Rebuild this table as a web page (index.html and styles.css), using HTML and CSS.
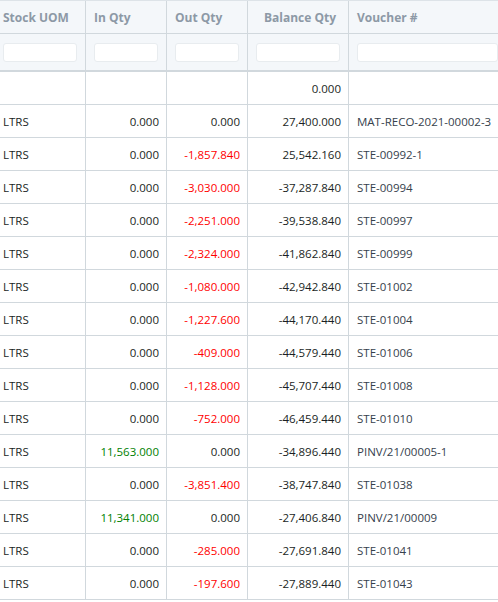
FILE: index.html
```html
<!DOCTYPE html>
<html>
<head>
<meta charset="utf-8">
<link rel="stylesheet" href="styles.css">
</head>
<body>
<div class="grid">
  <div class="row head">
    <div class="cell">Stock UOM</div>
    <div class="cell">In Qty</div>
    <div class="cell">Out Qty</div>
    <div class="cell num pr">Balance Qty</div>
    <div class="cell">Voucher #</div>
  </div>
  <div class="row filter">
    <div class="cell"><input class="fi" type="text"></div>
    <div class="cell"><input class="fi" type="text"></div>
    <div class="cell"><input class="fi" type="text"></div>
    <div class="cell"><input class="fi" type="text"></div>
    <div class="cell"><input class="fi" type="text"></div>
  </div>
  <div class="body" id="body">
    <div class="row data">
      <div class="cell"></div><div class="cell"></div><div class="cell"></div>
      <div class="cell num">0.000</div><div class="cell"></div>
    </div>
    <div class="row data"><div class="cell">LTRS</div><div class="cell num">0.000</div><div class="cell num">0.000</div><div class="cell num">27,400.000</div><div class="cell v">MAT-RECO-2021-00002-3</div></div>
    <div class="row data"><div class="cell">LTRS</div><div class="cell num">0.000</div><div class="cell num red">-1,857.840</div><div class="cell num">25,542.160</div><div class="cell v">STE-00992-1</div></div>
    <div class="row data"><div class="cell">LTRS</div><div class="cell num">0.000</div><div class="cell num red">-3,030.000</div><div class="cell num">-37,287.840</div><div class="cell v">STE-00994</div></div>
    <div class="row data"><div class="cell">LTRS</div><div class="cell num">0.000</div><div class="cell num red">-2,251.000</div><div class="cell num">-39,538.840</div><div class="cell v">STE-00997</div></div>
    <div class="row data"><div class="cell">LTRS</div><div class="cell num">0.000</div><div class="cell num red">-2,324.000</div><div class="cell num">-41,862.840</div><div class="cell v">STE-00999</div></div>
    <div class="row data"><div class="cell">LTRS</div><div class="cell num">0.000</div><div class="cell num red">-1,080.000</div><div class="cell num">-42,942.840</div><div class="cell v">STE-01002</div></div>
    <div class="row data"><div class="cell">LTRS</div><div class="cell num">0.000</div><div class="cell num red">-1,227.600</div><div class="cell num">-44,170.440</div><div class="cell v">STE-01004</div></div>
    <div class="row data"><div class="cell">LTRS</div><div class="cell num">0.000</div><div class="cell num red">-409.000</div><div class="cell num">-44,579.440</div><div class="cell v">STE-01006</div></div>
    <div class="row data"><div class="cell">LTRS</div><div class="cell num">0.000</div><div class="cell num red">-1,128.000</div><div class="cell num">-45,707.440</div><div class="cell v">STE-01008</div></div>
    <div class="row data"><div class="cell">LTRS</div><div class="cell num">0.000</div><div class="cell num red">-752.000</div><div class="cell num">-46,459.440</div><div class="cell v">STE-01010</div></div>
    <div class="row data"><div class="cell">LTRS</div><div class="cell num green">11,563.000</div><div class="cell num">0.000</div><div class="cell num">-34,896.440</div><div class="cell v">PINV/21/00005-1</div></div>
    <div class="row data"><div class="cell">LTRS</div><div class="cell num">0.000</div><div class="cell num red">-3,851.400</div><div class="cell num">-38,747.840</div><div class="cell v">STE-01038</div></div>
    <div class="row data"><div class="cell">LTRS</div><div class="cell num green">11,341.000</div><div class="cell num">0.000</div><div class="cell num">-27,406.840</div><div class="cell v">PINV/21/00009</div></div>
    <div class="row data"><div class="cell">LTRS</div><div class="cell num">0.000</div><div class="cell num red">-285.000</div><div class="cell num">-27,691.840</div><div class="cell v">STE-01041</div></div>
    <div class="row data"><div class="cell">LTRS</div><div class="cell num">0.000</div><div class="cell num red">-197.600</div><div class="cell num">-27,889.440</div><div class="cell v">STE-01043</div></div>
  </div>
</div>
</body>
</html>
```
FILE: styles.css
```css
html, body {
  margin: 0;
  padding: 0;
  background: #ffffff;
  overflow: hidden;
}
body {
  width: 498px;
  height: 602px;
  font-family: "Open Sans", "Noto Sans", sans-serif;
  font-size: 11.5px;
  color: #1a1f24;
}
.grid {
  margin-left: -5px;
  width: 512px;
}
.row {
  display: grid;
  grid-template-columns: 91px 81px 81px 101px 158px;
}
.cell {
  border-right: 1px solid #d1d8dd;
  padding: 0 7px 0 8px;
  display: flex;
  align-items: center;
  white-space: nowrap;
  overflow: hidden;
}
.cell.num {
  justify-content: flex-end;
}
.head {
  height: 34px;
  border-top: 1px solid #dde3e8;
  border-bottom: 1px solid #d1d8dd;
  background: #f4f7fa;
  box-sizing: border-box;
  font-size: 12px;
}
.head .cell {
  font-weight: 700;
  color: #8d99a6;
}
.head .cell.pr {
  padding-right: 12px;
}
.filter {
  height: 36px;
  background: #f4f7fa;
  border-bottom: 2px solid #d1d8dd;
  box-sizing: content-box;
}
.filter .cell {
  padding: 0 8px;
}
.fi {
  width: 100%;
  height: 19px;
  box-sizing: border-box;
  border: 1px solid #e8ecef;
  border-radius: 3px;
  background: #ffffff;
  margin: 0;
  padding: 0;
  outline: none;
}
.data {
  height: 33px;
  border-bottom: 1px solid #d1d8dd;
  box-sizing: border-box;
}
.red { color: #ff0000; }
.green { color: #008000; }
.v { color: #36414c; }
```
